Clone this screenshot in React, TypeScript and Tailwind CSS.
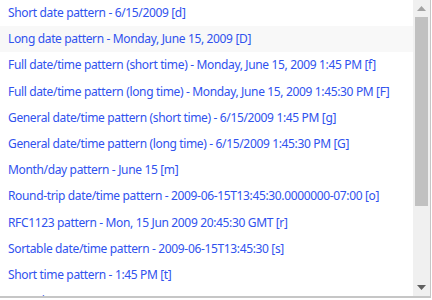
const items = [
  'Short date pattern - 6/15/2009 [d]',
  'Long date pattern - Monday, June 15, 2009 [D]',
  'Full date/time pattern (short time) - Monday, June 15, 2009 1:45 PM [f]',
  'Full date/time pattern (long time) - Monday, June 15, 2009 1:45:30 PM [F]',
  'General date/time pattern (short time) - 6/15/2009 1:45 PM [g]',
  'General date/time pattern (long time) - 6/15/2009 1:45:30 PM [G]',
  'Month/day pattern - June 15 [m]',
  'Round-trip date/time pattern - 2009-06-15T13:45:30.0000000-07:00 [o]',
  'RFC1123 pattern - Mon, 15 Jun 2009 20:45:30 GMT [r]',
  'Sortable date/time pattern - 2009-06-15T13:45:30 [s]',
  'Short time pattern - 1:45 PM [t]',
  'Long time pattern - 1:45:30 PM [T]'
];

export default function App() {
  return (
    <div className="w-[432px] h-[300px] bg-white overflow-hidden">
      <div className="flex w-[431px] h-[298px] border-r border-b-2 border-[#c6c6c6] bg-white">
        <div className="flex-1 overflow-hidden font-['Noto_Sans',sans-serif] text-[12px] tracking-[-0.35px] text-[#3052ee]">
          {items.map((item, i) => (
            <div
              key={item}
              className={
                (i === 1 ? 'bg-[#f8f8f8] ' : '') +
                'h-[26.2px] flex items-center pl-2 whitespace-nowrap leading-none'
              }
            >
              {item}
            </div>
          ))}
        </div>
        <div className="w-[17px] shrink-0 bg-[#f0f0f0] flex flex-col items-center">
          <div className="h-[17px] w-full flex items-center justify-center">
            <svg width="9" height="5" viewBox="0 0 9 5">
              <path d="M0 5 L4.5 0 L9 5 Z" fill="#a3a3a3" />
            </svg>
          </div>
          <div className="w-[13px] h-[189px] bg-[#c1c1c1]" />
          <div className="flex-1" />
          <div className="h-[17px] w-full flex items-center justify-center">
            <svg width="9" height="5" viewBox="0 0 9 5">
              <path d="M0 0 L9 0 L4.5 5 Z" fill="#606060" />
            </svg>
          </div>
        </div>
      </div>
    </div>
  );
}
